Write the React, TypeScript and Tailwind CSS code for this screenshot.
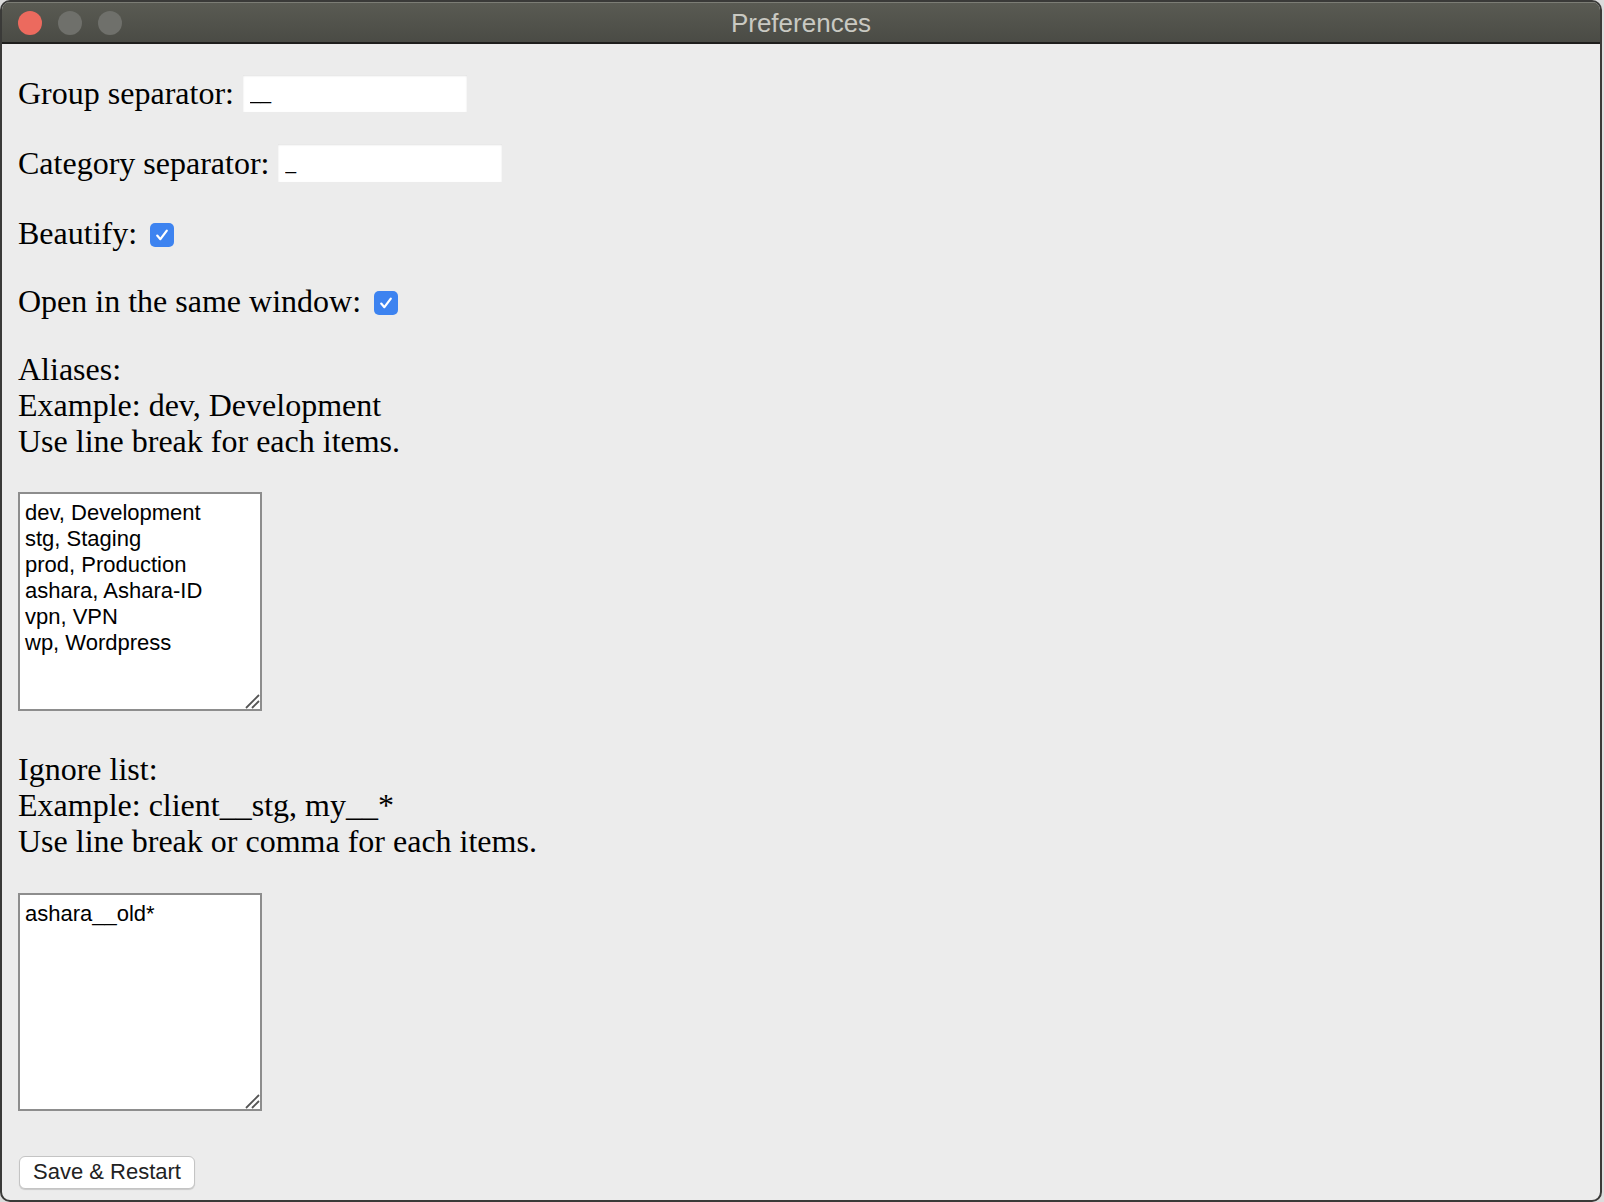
import { useState } from 'react';

const aliases = [
  'dev, Development',
  'stg, Staging',
  'prod, Production',
  'ashara, Ashara-ID',
  'vpn, VPN',
  'wp, Wordpress',
].join('\n');

function Check({ checked, onToggle }: { checked: boolean; onToggle: () => void }) {
  return (
    <button
      type="button"
      onClick={onToggle}
      className={`flex h-[24px] w-[24px] items-center justify-center rounded-[5px] ${
        checked ? 'bg-[#3d83f0]' : 'border border-[#b0b0b0] bg-white'
      }`}
    >
      {checked ? (
        <svg width="18" height="18" viewBox="0 0 18 18" fill="none">
          <path d="M4.2 9.6l3.2 3.6 6.4-8.6" stroke="white" strokeWidth="2.2" strokeLinecap="round" strokeLinejoin="round" />
        </svg>
      ) : null}
    </button>
  );
}

function Grip() {
  return (
    <svg className="pointer-events-none absolute bottom-[2px] right-[2px]" width="16" height="16" viewBox="0 0 16 16">
      <path d="M15 2L2 15M15 8L8 15" stroke="#555" strokeWidth="1.8" />
    </svg>
  );
}

function Area({ value, height }: { value: string; height: string }) {
  return (
    <div className={`relative w-[244px] ${height}`}>
      <textarea
        defaultValue={value}
        spellCheck={false}
        className="h-full w-full resize-none border-2 border-[#8d8d8d] bg-white px-[5px] pt-[6px] font-['Liberation_Sans',Arial,sans-serif] text-[22px] leading-[26px] text-black outline-none"
      />
      <Grip />
    </div>
  );
}

export default function App() {
  const [beautify, setBeautify] = useState(true);
  const [sameWindow, setSameWindow] = useState(true);

  return (
    <div className="h-[1202px] w-[1604px] bg-[#dcdcdc]">
      <div className="flex h-[1202px] w-[1602px] flex-col overflow-hidden rounded-[10px] border-2 border-[#3a3a38] bg-[#ececec]">
        {/* title bar */}
        <div className="relative flex h-[42px] shrink-0 items-center justify-center border-b-2 border-b-[#1e1e1c] bg-gradient-to-b from-[#5a5b53] to-[#4a4b45] shadow-[inset_0_1px_0_#7c7d75]">
          <div className="absolute left-[16px] top-[9px] flex gap-[16px]">
            <span className="h-[24px] w-[24px] rounded-full bg-[#ec6a5e]" />
            <span className="h-[24px] w-[24px] rounded-full bg-[#6f706b]" />
            <span className="h-[24px] w-[24px] rounded-full bg-[#6f706b]" />
          </div>
          <span className="pt-[2px] font-['Liberation_Sans',Arial,sans-serif] text-[26px] text-[#c9c9c2]">Preferences</span>
        </div>

        {/* form */}
        <div className="flex flex-col px-[16px] pt-[30px] font-['Liberation_Serif','Times_New_Roman',serif] text-[32px] leading-[36px] text-black">
          <div className="flex h-[38px] items-center gap-[9px]">
            <span>Group separator:</span>
            <input
              defaultValue="__"
              className="h-[37px] w-[224px] bg-white px-[7px] font-['Liberation_Sans',Arial,sans-serif] text-[19px] outline-none shadow-[inset_0_1px_2px_rgba(0,0,0,0.12)]"
            />
          </div>
          <div className="mt-[32px] flex h-[38px] items-center gap-[9px]">
            <span>Category separator:</span>
            <input
              defaultValue="_"
              className="h-[38px] w-[224px] bg-white px-[7px] font-['Liberation_Sans',Arial,sans-serif] text-[19px] outline-none shadow-[inset_0_1px_2px_rgba(0,0,0,0.12)]"
            />
          </div>
          <div className="mt-[33px] flex h-[36px] items-center gap-[13px]">
            <span>Beautify:</span>
            <span className="mt-[4px]">
              <Check checked={beautify} onToggle={() => setBeautify((v) => !v)} />
            </span>
          </div>
          <div className="mt-[32px] flex h-[36px] items-center gap-[13px]">
            <span>Open in the same window:</span>
            <span className="mt-[4px]">
              <Check checked={sameWindow} onToggle={() => setSameWindow((v) => !v)} />
            </span>
          </div>

          <p className="mt-[32px]">
            Aliases:
            <br />
            Example: dev, Development
            <br />
            Use line break for each items.
          </p>
          <div className="mt-[33px]">
            <Area value={aliases} height="h-[219px]" />
          </div>

          <p className="mt-[40px]">
            Ignore list:
            <br />
            Example: client__stg, my__*
            <br />
            Use line break or comma for each items.
          </p>
          <div className="mt-[34px]">
            <Area value="ashara__old*" height="h-[218px]" />
          </div>

          <div className="mt-[39px]">
            <button
              type="button"
              className="ml-[1px] h-[33px] w-[176px] rounded-[6px] border border-[#c4c4c4] bg-white font-['Liberation_Sans',Arial,sans-serif] text-[22px] leading-none text-[#222] shadow-[0_1px_1px_rgba(0,0,0,0.15)]"
            >
              Save &amp; Restart
            </button>
          </div>
        </div>
      </div>
    </div>
  );
}
